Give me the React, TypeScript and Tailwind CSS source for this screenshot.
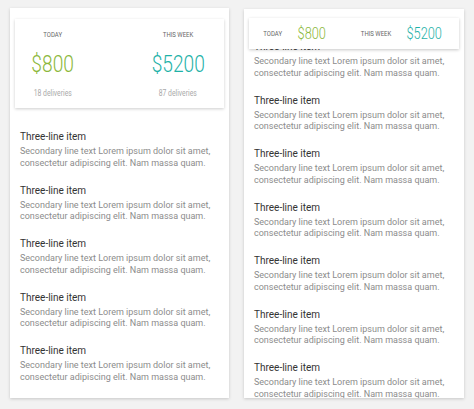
const items = Array.from({ length: 7 });

function ListItem() {
  return (
    <div className="whitespace-nowrap px-[10px] py-[7.25px]">
      <div className="text-[10px] leading-[14px] text-[#333]">Three-line item</div>
      <div className="mt-[2px] text-[9px] leading-[11.5px] text-[#8c8c8c]">
        Secondary line text Lorem ipsum dolor sit amet,
        <br />
        consectetur adipiscing elit. Nam massa quam.
      </div>
    </div>
  );
}

function Narrow({ children, className }: { children: React.ReactNode; className: string }) {
  return (
    <div className={`flex justify-center whitespace-nowrap ${className}`}>
      <span className="inline-block origin-center scale-x-[0.8]">{children}</span>
    </div>
  );
}

function StatColumn({ label, amount, count, color }: { label: string; amount: string; count: string; color: string }) {
  return (
    <div className="flex w-[60px] flex-col items-center">
      <Narrow className="text-[7.5px] leading-[12px] text-[#666]">{label}</Narrow>
      <Narrow className={`mt-[8px] text-[24px] font-light leading-[30px] ${color}`}>{amount}</Narrow>
      <Narrow className="mt-[8px] text-[8.5px] leading-[12px] text-[#aaa]">{count}</Narrow>
    </div>
  );
}

export default function App() {
  return (
    <div className="flex h-[409px] w-[474px] overflow-hidden bg-[#f2f2f2] font-['Roboto',sans-serif]">
      <div className="ml-[10px] mt-[8px] flex h-[390px] w-[219px] shrink-0 flex-col overflow-hidden bg-white shadow-[0_1px_3px_rgba(0,0,0,0.18)]">
        <div className="mx-[5px] mt-[11px] flex h-[89px] shrink-0 justify-between bg-white pl-[8px] pr-[16px] pt-[10px] shadow-[0_1px_3px_rgba(0,0,0,0.2)]">
          <StatColumn label="TODAY" amount="$800" count="18 deliveries" color="text-[#8cb83c]" />
          <StatColumn label="THIS WEEK" amount="$5200" count="87 deliveries" color="text-[#1fb2a8]" />
        </div>
        <div className="mt-[14.75px]">
          {items.slice(0, 5).map((_, i) => (
            <ListItem key={i} />
          ))}
        </div>
      </div>
      <div className="relative ml-[15px] mt-[9px] h-[389px] w-[220px] shrink-0 overflow-hidden bg-white shadow-[0_1px_3px_rgba(0,0,0,0.18)]">
        <div className="pt-[23.75px]">
          {items.map((_, i) => (
            <ListItem key={i} />
          ))}
        </div>
        <div className="absolute left-[5px] right-[5px] top-[9px] flex h-[31px] items-center bg-white pl-[14px] shadow-[0_1px_3px_rgba(0,0,0,0.22)]">
          <Narrow className="w-[20px] text-[7.5px] text-[#666]">TODAY</Narrow>
          <Narrow className="ml-[15px] w-[27px] text-[16px] font-light text-[#8cb83c]">$800</Narrow>
          <Narrow className="ml-[35px] w-[33px] text-[7.5px] text-[#666]">THIS WEEK</Narrow>
          <Narrow className="ml-[14px] w-[35px] text-[16px] font-light text-[#1fb2a8]">$5200</Narrow>
        </div>
      </div>
    </div>
  );
}
